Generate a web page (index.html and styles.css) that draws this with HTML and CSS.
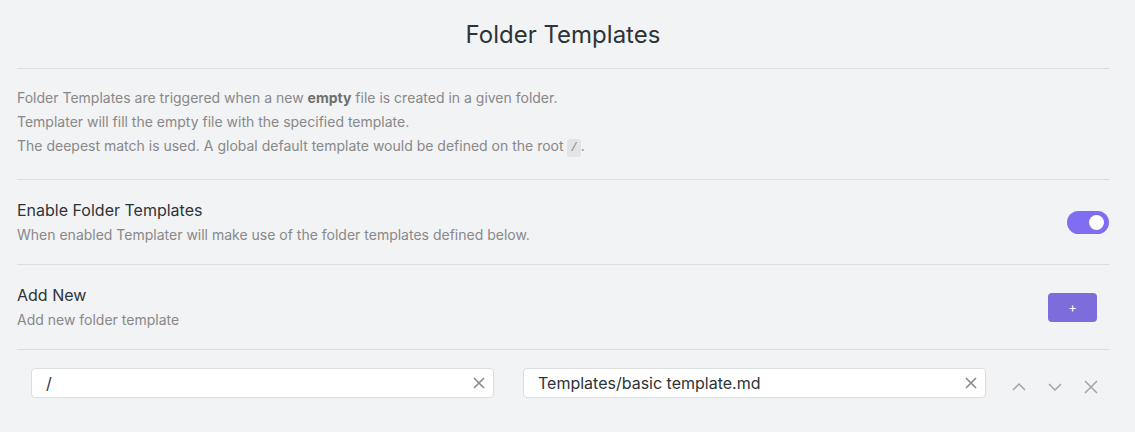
FILE: index.html
```html
<!DOCTYPE html>
<html>
<head>
<meta charset="utf-8">
<link rel="stylesheet" href="styles.css">
</head>
<body>
<div class="page">
  <h2 class="title">Folder Templates</h2>
  <div class="intro">
    <div>Folder Templates are triggered when a new <strong>empty</strong> file is created in a given folder.</div>
    <div>Templater will fill the empty file with the specified template.</div>
    <div>The deepest match is used. A global default template would be defined on the root <code>/</code>.</div>
  </div>
  <div class="setting">
    <div class="info">
      <div class="name">Enable Folder Templates</div>
      <div class="desc">When enabled Templater will make use of the folder templates defined below.</div>
    </div>
    <div class="toggle"><span class="knob"></span></div>
  </div>
  <div class="setting">
    <div class="info">
      <div class="name">Add New</div>
      <div class="desc">Add new folder template</div>
    </div>
    <button class="add">+</button>
  </div>
  <div class="row">
    <div class="field"><span class="val">/</span><span class="clear"><svg viewBox="0 0 24 24" width="20" height="20"><path d="M18 6 6 18M6 6l12 12"/></svg></span></div>
    <div class="field"><span class="val">Templates/basic template.md</span><span class="clear"><svg viewBox="0 0 24 24" width="20" height="20"><path d="M18 6 6 18M6 6l12 12"/></svg></span></div>
    <div class="buttons">
      <span class="icon"><svg viewBox="0 0 24 24" width="24" height="24"><path d="m6 15 6-6 6 6"/></svg></span>
      <span class="icon"><svg viewBox="0 0 24 24" width="24" height="24"><path d="m6 9 6 6 6-6"/></svg></span>
      <span class="icon"><svg viewBox="0 0 24 24" width="24" height="24"><path d="M18 6 6 18M6 6l12 12"/></svg></span>
    </div>
  </div>
</div>
</body>
</html>
```
FILE: styles.css
```css
html, body {
  margin: 0;
  padding: 0;
  background: #f2f3f5;
  font-family: Inter, "Noto Sans", sans-serif;
  color: #2e3338;
}
.page {
  padding: 17px 26px 0 17px;
}
.title {
  margin: 0;
  font-size: 24px;
  font-weight: 400;
  line-height: 36px;
  text-align: center;
  padding-bottom: 15px;
  border-bottom: 1px solid #dcdde1;
}
.intro {
  padding: 17px 0 21px;
  font-size: 14px;
  line-height: 24px;
  color: #888888;
}
.intro div {
  height: 24px;
}
.intro strong {
  color: #6f6f6f;
  font-weight: 700;
}
.intro code {
  font-family: "Liberation Mono", "DejaVu Sans Mono", monospace;
  font-size: 12px;
  line-height: 1;
  background: #e3e4e7;
  color: #888;
  border-radius: 3px;
  padding: 2px 3px;
}
.setting {
  display: flex;
  align-items: center;
  justify-content: space-between;
  border-top: 1px solid #dcdde1;
  padding: 19px 0 19px;
}
.name {
  font-size: 16px;
  line-height: 22px;
}
.desc {
  margin-top: 4px;
  font-size: 14px;
  line-height: 20px;
  color: #888888;
}
.toggle {
  width: 42px;
  height: 23px;
  border-radius: 12px;
  background: #7f6df2;
  display: flex;
  align-items: center;
  justify-content: flex-end;
  padding-right: 5px;
  box-sizing: border-box;
}
.knob {
  width: 15px;
  height: 15px;
  border-radius: 50%;
  background: #fff;
}
.add {
  width: 49px;
  height: 29px;
  margin-right: 12px;
  border: none;
  border-radius: 4px;
  background: #7d6ddc;
  color: #fff;
  font-family: Inter, sans-serif;
  font-size: 13px;
  padding: 0;
}
.row {
  display: flex;
  align-items: flex-start;
  border-top: 1px solid #dcdde1;
  padding: 18px 0 30px 14px;
}
.field {
  width: 463px;
  height: 30px;
  box-sizing: border-box;
  background: #ffffff;
  border: 1px solid #dcdde1;
  border-radius: 4px;
  display: flex;
  align-items: center;
  justify-content: space-between;
  padding: 0 4px 0 14px;
  font-size: 16px;
}
.field + .field {
  margin-left: 29px;
}
.clear {
  display: flex;
  stroke: #8a8a8a;
  stroke-width: 2;
  fill: none;
}
.buttons {
  display: flex;
  margin-left: 15px;
  margin-top: 7px;
}
.icon {
  width: 36px;
  height: 24px;
  display: flex;
  justify-content: center;
  stroke: #a3a3a3;
  stroke-width: 1.5;
  fill: none;
}
```
